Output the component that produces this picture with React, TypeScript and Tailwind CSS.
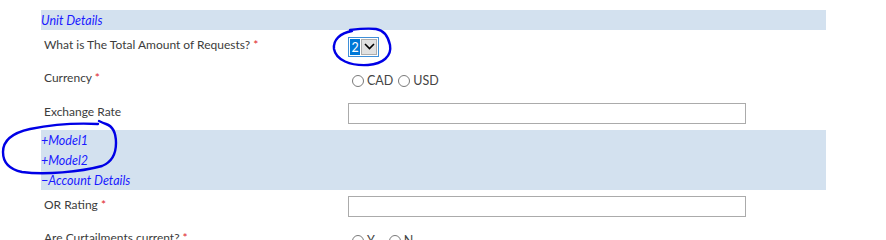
import React from 'react';

const font = { fontFamily: '"Segoe UI", Lato, "Noto Sans", sans-serif' };

function Band({ lines }: { lines: string[] }) {
  return (
    <div className="flex flex-col bg-[#d3e1ef]">
      {lines.map((t) => (
        <div key={t} className="h-[20px] pt-[3px] flex items-center text-[12.5px] italic text-[#1a1aff] leading-none">
          {t}
        </div>
      ))}
    </div>
  );
}

function Label({ text, required }: { text: string; required?: boolean }) {
  return (
    <div className="w-[307px] pl-[3px] pb-[3px] text-[12px] text-[#3c3c3c] leading-none">
      {text}
      {required && <span className="text-[#e0262b]"> *</span>}
    </div>
  );
}

function Radio({ label }: { label: string }) {
  return (
    <span className="flex items-center gap-[3px]">
      <span className="w-[12px] h-[12px] rounded-full border border-[#7a7a7a] bg-white" />
      <span>{label}</span>
    </span>
  );
}

function TextBox() {
  return <div className="w-[398px] h-[21px] border border-[#ababab] bg-white" />;
}

function Select() {
  return (
    <div className="flex h-[20px] w-[31px] border border-[#3f8fd8] bg-white p-[1px]">
      <div className="w-[10px] bg-[#0078d7] text-white text-[12.5px] leading-[17px] text-center">2</div>
      <div className="flex-1 ml-[1px] bg-[#e1e1e1] border border-[#adadad] flex items-center justify-center">
        <svg width="11" height="7" viewBox="0 0 11 7">
          <path d="M1 1 L5.5 5.5 L10 1" fill="none" stroke="#000" strokeWidth="1.6" />
        </svg>
      </div>
    </div>
  );
}

export default function App() {
  return (
    <div className="relative w-[886px] h-[240px] bg-white overflow-hidden" style={font}>
      <div className="pt-[10px] pl-[41px] w-[826px]">
        <Band lines={['Unit Details']} />
        <div className="h-[33px] flex items-center">
          <Label text="What is The Total Amount of Requests?" required />
          <Select />
        </div>
        <div className="h-[33px] flex items-center">
          <Label text="Currency" required />
          <div className="flex items-center gap-[5px] pl-[4px] pt-[3px] text-[12.5px] text-[#444444]">
            <Radio label="CAD" />
            <Radio label="USD" />
          </div>
        </div>
        <div className="h-[34px] flex items-center">
          <Label text="Exchange Rate" />
          <TextBox />
        </div>
        <Band lines={['+Model1', '+Model2', '−Account Details']} />
        <div className="h-[33px] flex items-center">
          <Label text="OR Rating" required />
          <TextBox />
        </div>
        <div className="h-[33px] flex items-center">
          <Label text="Are Curtailments current?" required />
          <div className="flex items-center gap-[14px] pl-[4px] pt-[3px] text-[12.5px] text-[#444444]">
            <Radio label="Y" />
            <Radio label="N" />
          </div>
        </div>
      </div>

      {/* hand-drawn annotations */}
      <svg className="absolute left-0 top-0 pointer-events-none" width="886" height="240">
        <path
          d="M352 31 C340 33 333 40 334 49 C336 60 350 66 368 65 C383 64 392 56 390 45 C388 36 383 30 376 29 C368 28 358 29 350 30"
          fill="none"
          stroke="#0000e6"
          strokeWidth="2.4"
          strokeLinecap="round"
        />
        <path
          d="M98 124 C80 123 55 124 30 129 C12 133 3 141 3 152 C3 162 8 169 22 172 C45 175 80 172 102 166 C112 162 116 154 116 143 C116 132 112 126 106 124 C103 123 101 122 99 121"
          fill="none"
          stroke="#0000e6"
          strokeWidth="2.4"
          strokeLinecap="round"
        />
      </svg>
    </div>
  );
}
